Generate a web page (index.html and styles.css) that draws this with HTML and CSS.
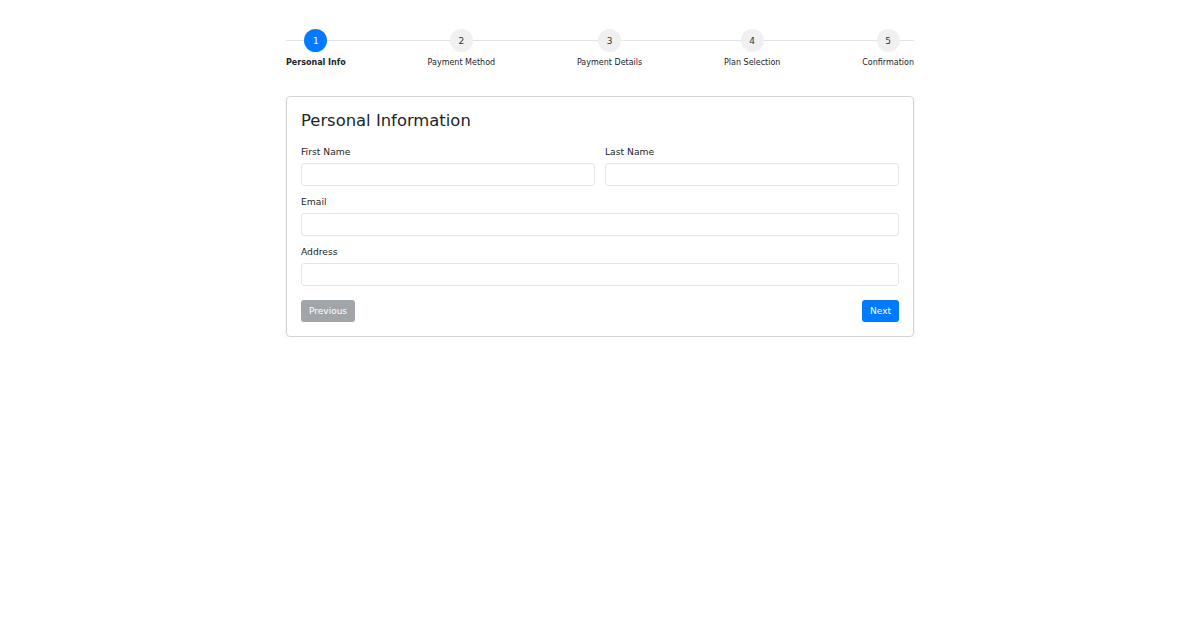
FILE: index.html
```html
<!DOCTYPE html>
<html lang="en">
<head>
    <meta charset="UTF-8">
    <meta name="viewport" content="width=device-width, initial-scale=1.0">
    <title>Checkout - Personal Information</title>
    <link rel="stylesheet" href="styles.css">
</head>
<body>
    <div class="wizard">
        <div class="steps">
            <div class="step active">
                <div class="step-num">1</div>
                <div class="step-label">Personal Info</div>
            </div>
            <div class="step">
                <div class="step-num">2</div>
                <div class="step-label">Payment Method</div>
            </div>
            <div class="step">
                <div class="step-num">3</div>
                <div class="step-label">Payment Details</div>
            </div>
            <div class="step">
                <div class="step-num">4</div>
                <div class="step-label">Plan Selection</div>
            </div>
            <div class="step">
                <div class="step-num">5</div>
                <div class="step-label">Confirmation</div>
            </div>
        </div>

        <div class="card">
            <h2>Personal Information</h2>
            <form>
                <div class="row">
                    <div class="field">
                        <label for="first-name">First Name</label>
                        <input type="text" id="first-name">
                    </div>
                    <div class="field">
                        <label for="last-name">Last Name</label>
                        <input type="text" id="last-name">
                    </div>
                </div>
                <div class="field">
                    <label for="email">Email</label>
                    <input type="email" id="email">
                </div>
                <div class="field">
                    <label for="address">Address</label>
                    <input type="text" id="address">
                </div>
                <div class="actions">
                    <button type="button" class="btn btn-prev" disabled>Previous</button>
                    <button type="button" class="btn btn-next">Next</button>
                </div>
            </form>
        </div>
    </div>
</body>
</html>
```
FILE: styles.css
```css
body {
    margin: 0;
    padding-top: 29px;
    font-family: "DejaVu Sans", sans-serif;
    background-color: #fff;
    color: #212529;
}

.wizard {
    max-width: 628px;
    margin: 0 auto;
}

/* step indicator */
.steps {
    display: flex;
    justify-content: space-between;
    position: relative;
    margin-bottom: 28px;
}

.steps::before {
    content: '';
    position: absolute;
    top: 11px;
    left: 0;
    right: 0;
    border-top: 1px solid #e3e3e3;
}

.step {
    display: flex;
    flex-direction: column;
    align-items: center;
    gap: 6px;
    position: relative;
}

.step-num {
    width: 23px;
    height: 23px;
    border-radius: 50%;
    background-color: #f0f0f0;
    color: #333;
    font-size: 9px;
    display: flex;
    align-items: center;
    justify-content: center;
}

.step-label {
    font-size: 8px;
    line-height: 10px;
    color: #212529;
}

.step.active .step-num {
    background-color: #007bff;
    color: #fff;
}

.step.active .step-label {
    font-weight: bold;
}

/* card */
.card {
    border: 1px solid #d4d4d4;
    border-radius: 4px;
    box-shadow: 0 1px 3px rgba(0, 0, 0, 0.08);
    padding: 14px;
}

h2 {
    margin: 0 0 15px;
    font-size: 16.4px;
    font-weight: normal;
    line-height: 20px;
}

.row {
    display: flex;
    gap: 10px;
}

.row .field {
    flex: 1;
}

.field {
    display: flex;
    flex-direction: column;
    margin-bottom: 10px;
}

label {
    font-size: 9.2px;
    line-height: 11px;
    margin-bottom: 6px;
}

input {
    height: 23px;
    box-sizing: border-box;
    border: 1px solid #e4e6e8;
    border-radius: 3px;
    padding: 0 6px;
    font-family: inherit;
    font-size: 9px;
}

.actions {
    display: flex;
    justify-content: space-between;
    margin-top: 14px;
}

.btn {
    height: 22px;
    padding: 0 8px;
    border: none;
    border-radius: 3px;
    font-family: inherit;
    font-size: 9px;
    color: #fff;
    cursor: pointer;
}

.btn-prev {
    background-color: #a1a5aa;
    cursor: default;
}

.btn-next {
    background-color: #007bff;
}
```
